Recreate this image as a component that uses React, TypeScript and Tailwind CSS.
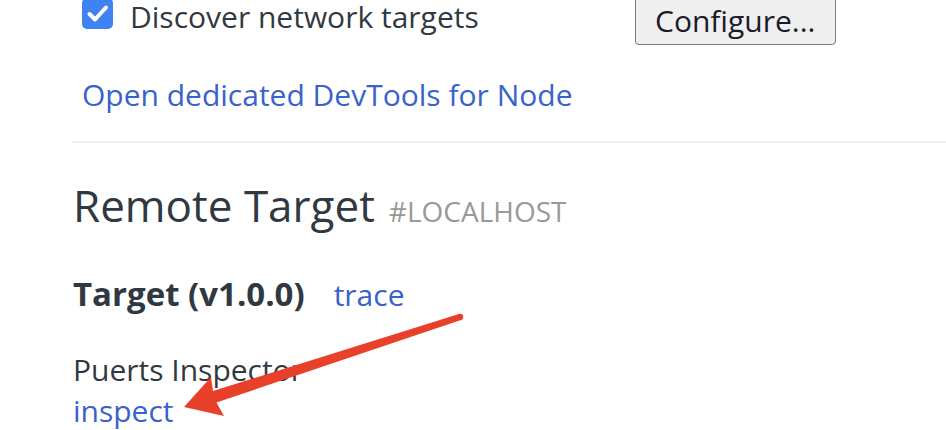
import React from "react";

function CheckMark() {
  return (
    <svg viewBox="0 0 31 31" className="h-[31px] w-[31px]">
      <rect x="0" y="0" width="31" height="31" rx="5" fill="#3f82f1" />
      <path
        d="M7.5 16 L13 21.5 L24 9.5"
        fill="none"
        stroke="#fff"
        strokeWidth="4"
        strokeLinecap="round"
        strokeLinejoin="round"
      />
    </svg>
  );
}

// red annotation arrow pointing at the inspect link
function Arrow() {
  return (
    <svg
      className="pointer-events-none absolute left-0 top-0"
      width="946"
      height="430"
      viewBox="0 0 946 430"
    >
      <polygon
        points="184,407 224,416 216.5,402.5 461,320 459,314 213,391 211,377"
        fill="#e8402b"
      />
      <circle cx="460" cy="317" r="3.2" fill="#e8402b" />
    </svg>
  );
}

export default function App() {
  return (
    <div className="relative h-[430px] w-[946px] overflow-hidden bg-white font-['Open_Sans','Noto_Sans',sans-serif] text-[#303942]">
      <div className="flex h-[45px] items-start">
        <div className="flex w-[635px] items-start pl-[82px]">
          <div className="-mt-[2px]">
            <CheckMark />
          </div>
          <span className="ml-[17px] whitespace-nowrap text-[30px] leading-[34px]">
            Discover network targets
          </span>
        </div>
        <button
          type="button"
          className="-mt-[5px] h-[50px] w-[201px] rounded-[4px] border border-[#7a7a7a] bg-[#efefef] pl-[19px] text-left text-[30px] leading-[41px] text-[#1a1a2a]"
        >
          Configure...
        </button>
      </div>

      <div className="mt-[29px] pl-[82px] text-[30px] leading-[41px] text-[#3a62cc]">
        Open dedicated DevTools for Node
      </div>

      <div className="ml-[72px] mt-[26px] h-[2px] bg-[#efefef]" />

      <div className="mt-[32px] flex items-baseline pl-[73px]">
        <span className="text-[44px] leading-[60px]">Remote Target</span>
        <span className="ml-[14px] text-[28px] text-[#999]">#LOCALHOST</span>
      </div>

      <div className="mt-[37px] flex items-baseline pl-[73px]">
        <span className="text-[33px] font-bold leading-[44px]">Target (v1.0.0)</span>
        <span className="ml-[29px] text-[30px] leading-[44px] text-[#3a62cc]">trace</span>
      </div>

      <div className="mt-[33px] pl-[73px] text-[30px] leading-[40px]">
        Puerts Inspector
      </div>
      <div className="pl-[73px] text-[30px] leading-[41px] text-[#3a62cc]">
        inspect
      </div>

      <Arrow />
    </div>
  );
}
